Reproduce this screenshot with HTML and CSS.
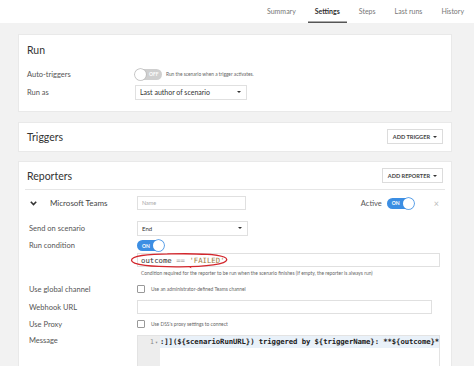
FILE: index.html
```html
<!DOCTYPE html>
<html>
<head>
<meta charset="utf-8">
<link rel="stylesheet" href="styles.css">
</head>
<body>
<nav class="tabs">
  <a class="tab">Summary</a>
  <a class="tab active">Settings</a>
  <a class="tab">Steps</a>
  <a class="tab">Last runs</a>
  <a class="tab">History</a>
</nav>
<main class="page">
  <section class="card run-card">
    <div class="card-head"><h2>Run</h2></div>
    <div class="row row-18">
      <label class="lbl">Auto-triggers</label>
      <div class="ctrl">
        <span class="toggle off"><span class="knob"></span><span class="toggle-text">OFF</span></span>
        <span class="hint">Run the scenario when a trigger activates.</span>
      </div>
    </div>
    <div class="row row-18">
      <label class="lbl">Run as</label>
      <div class="ctrl">
        <div class="select select-run">Last author of scenario<span class="caret"></span></div>
      </div>
    </div>
  </section>

  <section class="card">
    <div class="card-head"><h2>Triggers</h2><button class="btn">ADD TRIGGER <span class="caret"></span></button></div>
  </section>

  <section class="card reporters">
    <div class="card-head bordered"><h2>Reporters</h2><button class="btn">ADD REPORTER <span class="caret"></span></button></div>
    <div class="rep-body">
      <div class="row row-teams">
        <div class="lbl teams-lbl">
          <svg class="chev" width="7" height="5" viewBox="0 0 7 5"><path d="M0.8 0.8 L3.5 3.6 L6.2 0.8" fill="none" stroke="#333" stroke-width="1.6"/></svg>
          <span class="teams-name">Microsoft Teams</span>
        </div>
        <div class="ctrl grow">
          <div class="input name-input">Name</div>
          <span class="spacer"></span>
          <span class="active-lbl">Active</span>
          <span class="toggle on"><span class="toggle-text">ON</span><span class="knob"></span></span>
          <span class="close">×</span>
        </div>
      </div>
      <div class="row row-send">
        <label class="lbl">Send on scenario</label>
        <div class="ctrl">
          <div class="select select-end">End<span class="caret"></span></div>
        </div>
      </div>
      <div class="row row-cond">
        <label class="lbl lbl-top">Run condition</label>
        <div class="ctrl col">
          <span class="toggle on"><span class="toggle-text">ON</span><span class="knob"></span></span>
          <div class="input code-input">
            <span class="code-text"><span class="c-var">outcome</span> <span class="c-op">==</span> <span class="c-str">'FAILED'</span><svg class="mark" viewBox="0 0 106 19" preserveAspectRatio="none"><path d="M40 2.2 C70 1.4 101 2.5 102 8.2 C103 13.6 80 16.4 53 16.6 C24 16.8 2.5 14.6 2.6 9.3 C2.7 4 18 2.4 44 2.1" fill="none" stroke="#d3262c" stroke-width="1.3" vector-effect="non-scaling-stroke"/><path d="M63 16.5 L65 17.6" stroke="#d3262c" stroke-width="1" vector-effect="non-scaling-stroke"/></svg></span>
          </div>
          <div class="help">Condition required for the reporter to be run when the scenario finishes (if empty, the reporter is always run)</div>
        </div>
      </div>
      <div class="row row-16">
        <label class="lbl">Use global channel</label>
        <div class="ctrl"><span class="check"></span><span class="hint2">Use an administrator-defined Teams channel</span></div>
      </div>
      <div class="row row-20">
        <label class="lbl">Webhook URL</label>
        <div class="ctrl"><div class="input url-input"></div></div>
      </div>
      <div class="row row-14">
        <label class="lbl">Use Proxy</label>
        <div class="ctrl"><span class="check"></span><span class="hint2">Use DSS's proxy settings to connect</span></div>
      </div>
      <div class="row row-msg">
        <label class="lbl lbl-msg">Message</label>
        <div class="ctrl">
          <div class="editor">
            <div class="gutter"><span class="ln">1</span><span class="fold">▾</span></div>
            <div class="code">
              <div class="code-line">:]](${scenarioRunURL}) triggered by ${triggerName}: **${outcome}**<span class="cursor"></span></div>
            </div>
          </div>
        </div>
      </div>
    </div>
  </section>
</main>
</body>
</html>
```

FILE: styles.css
```css
* { box-sizing: border-box; }
html, body { margin: 0; padding: 0; }
body {
  background: #f2f2f2;
  font-family: Lato, "Open Sans", sans-serif;
  color: #444;
  width: 474px;
  height: 366px;
  overflow: hidden;
}
.tabs {
  height: 23px;
  background: #fff;
  display: flex;
  justify-content: flex-end;
  gap: 5px;
  padding-right: 3px;
}
.tab {
  padding: 0 7px;
  line-height: 23px;
  font-size: 7px;
  color: #777;
}
.tab.active {
  color: #333;
  font-weight: 700;
  box-shadow: inset 0 -1.5px 0 #555;
}
.page {
  padding: 12px 23px 0 19px;
  display: flex;
  flex-direction: column;
  gap: 11.5px;
}
.card {
  background: #fff;
  box-shadow: 0 0 0 1px #e9e9e9;
  padding: 0 8px;
}
.run-card { padding-bottom: 10px; }
.card-head {
  height: 28px;
  display: flex;
  align-items: center;
  justify-content: space-between;
}
.run-card .card-head { height: 30px; }
.card-head h2 {
  margin: 0;
  font-size: 10.5px;
  font-weight: 400;
  color: #333;
}
.card-head.bordered {
  border-bottom: 1px solid #e6e6e6;
  margin: 0 -2px;
  padding: 0 2px;
}
.btn {
  font-family: Lato, sans-serif;
  font-size: 5.6px;
  letter-spacing: 0;
  font-weight: 700;
  color: #444;
  background: #fff;
  border: 1px solid #dcdcdc;
  height: 15px;
  padding: 0 5px 0 5px;
  display: flex;
  align-items: center;
  gap: 3px;
}
.caret {
  display: inline-block;
  width: 0;
  height: 0;
  border-left: 2px solid transparent;
  border-right: 2px solid transparent;
  border-top: 2.5px solid #333;
}
.row {
  display: flex;
  align-items: center;
}
.row-18 { height: 18px; }
.row-16 { height: 16px; }
.row-20 { height: 20px; }
.row-14 { height: 14px; }
.row-teams { height: 26px; }
.row-send { height: 24px; }
.lbl {
  width: 108px;
  flex: none;
  font-size: 7.5px;
  color: #555;
}
.ctrl {
  display: flex;
  align-items: center;
}
.ctrl.grow { flex: 1; }
.ctrl.col {
  flex-direction: column;
  align-items: flex-start;
  flex: 1;
}
.toggle {
  width: 27px;
  height: 11px;
  border-radius: 6px;
  display: flex;
  align-items: center;
  font-size: 5px;
  font-weight: 700;
  color: #fff;
  flex: none;
}
.toggle.off { background: #cfcfcf; }
.toggle.on { background: #3c8ee3; }
.knob {
  width: 11px;
  height: 11px;
  border-radius: 50%;
  background: #fff;
  box-shadow: 0 0 0 0.8px #bbb;
  flex: none;
}
.toggle.on .knob { box-shadow: 0 0 0 0.8px #3c8ee3; margin-left: auto; }
.toggle.off .toggle-text { margin-left: 3px; }
.toggle.on .toggle-text { margin-left: 5px; }
.hint {
  font-size: 4.8px;
  color: #666;
  margin-left: 4px;
}
.select {
  height: 15px;
  border: 1px solid #e0e0e0;
  display: flex;
  align-items: center;
  justify-content: space-between;
  padding: 0 5px 0 4px;
  font-size: 7px;
  color: #333;
}
.select-run { width: 112px; }
.select-end { width: 111px; font-size: 6px; }
.rep-body { padding-left: 2px; }
.teams-lbl {
  display: flex;
  align-items: center;
}
.chev { margin-left: 1px; }
.teams-name {
  margin-left: 13px;
  font-size: 8px;
  color: #444;
}
.input {
  height: 14px;
  border: 1px solid #e0e0e0;
  display: flex;
  align-items: center;
  padding: 0 4px;
}
.name-input {
  width: 109px;
  font-size: 5.5px;
  color: #aaa;
}
.spacer { flex: 1; }
.active-lbl {
  font-size: 7.5px;
  color: #555;
  margin-right: 5px;
}
.close {
  font-size: 9px;
  color: #bbb;
  margin: 0 4px 0 20px;
  line-height: 1;
}
.row-cond {
  align-items: flex-start;
  padding-bottom: 3px;
}
.lbl-top { line-height: 11px; }
.code-input {
  margin-top: 2px;
  width: 303px;
  font-family: "DejaVu Sans Mono", monospace;
  font-size: 7.3px;
  padding-left: 3px;
}
.code-text {
  white-space: pre;
  position: relative;
}
.c-var { color: #333; }
.c-op { color: #888; }
.c-str { color: #9c7a3c; }
.mark {
  position: absolute;
  left: -12px;
  right: -6px;
  top: -4px;
  bottom: -4px;
  width: calc(100% + 18px);
  height: calc(100% + 8px);
  overflow: visible;
}
.help {
  margin-top: 1px;
  line-height: 10px;
  font-size: 4.9px;
  color: #666;
  padding-left: 4px;
}
.check {
  width: 8px;
  height: 8px;
  border: 1px solid #999;
  border-radius: 1px;
  flex: none;
}
.hint2 {
  font-size: 4.9px;
  color: #666;
  margin-left: 6px;
}
.url-input { width: 295px; }
.row-msg {
  align-items: flex-start;
  margin-top: 4px;
}
.lbl-msg { line-height: 12px; }
.editor {
  width: 303px;
  height: 40px;
  border: 1px solid #e3e3e3;
  border-bottom: none;
  display: flex;
  overflow: hidden;
}
.gutter {
  width: 22px;
  flex: none;
  background: #ededed;
  height: 100%;
  display: flex;
  align-items: flex-start;
  justify-content: flex-end;
  padding-right: 2px;
  font-family: "DejaVu Sans Mono", monospace;
  font-size: 6.5px;
  color: #888;
  line-height: 12px;
  gap: 1px;
}
.fold { font-size: 5px; }
.code {
  flex: 1;
  overflow: hidden;
}
.code-line {
  height: 12px;
  line-height: 12px;
  background: #e9f1f9;
  white-space: nowrap;
  font-family: "DejaVu Sans Mono", monospace;
  font-size: 7.3px;
  color: #222;
  font-weight: 700;
  letter-spacing: -0.1px;
}
.cursor {
  display: inline-block;
  width: 1px;
  height: 9px;
  background: #222;
  vertical-align: middle;
}
```
